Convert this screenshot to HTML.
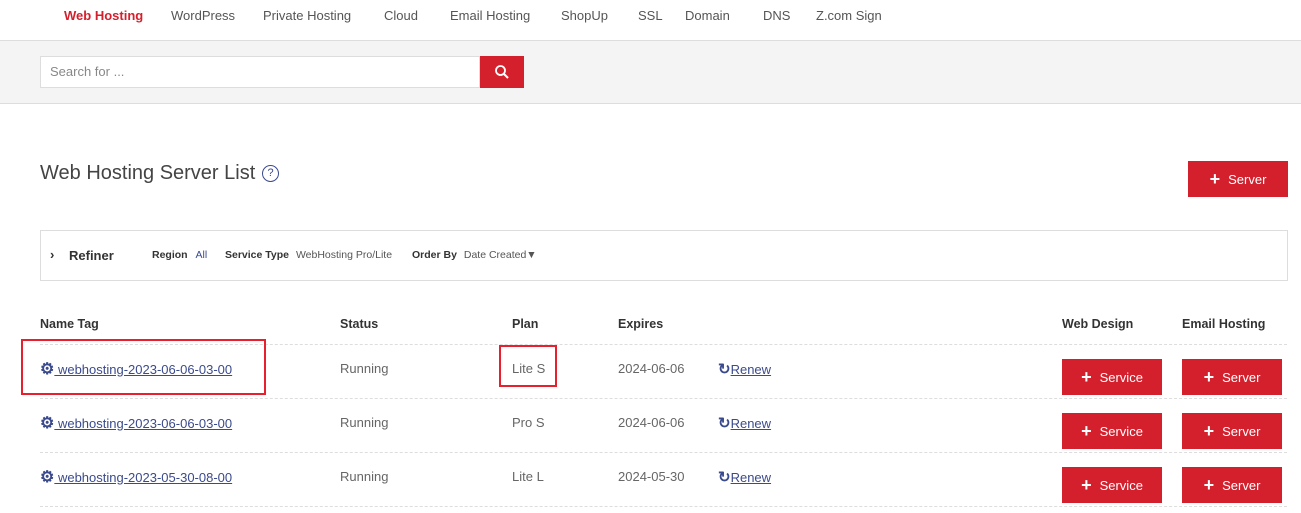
<!DOCTYPE html><html><head><style>
body{margin:0;width:1301px;height:513px;background:#fff;font-family:"Liberation Sans",sans-serif;color:#555;position:relative;overflow:hidden}
.a{position:absolute;white-space:nowrap}
.nav{top:8px;font-size:13px;color:#555}
.btn{position:absolute;background:#d4202d;color:#fff;font-size:13px;display:flex;align-items:center;justify-content:center}
.btn b{font-size:18px;margin-right:8px;font-weight:bold}
.h{font-size:12.5px;font-weight:bold;color:#333;top:317px}
.line{position:absolute;left:40px;width:1247px;border-top:1px dashed #ddd}
.c{font-size:13px;color:#666}
.lnk{color:#3b4a8c;text-decoration:underline;font-size:13px}
.g{color:#3b4a8c;font-size:16px;font-weight:bold}
</style></head><body>
<div class="a nav" style="left:64px;color:#d4202d;font-weight:bold">Web Hosting</div>
<div class="a nav" style="left:171px">WordPress</div>
<div class="a nav" style="left:263px">Private Hosting</div>
<div class="a nav" style="left:384px">Cloud</div>
<div class="a nav" style="left:450px">Email Hosting</div>
<div class="a nav" style="left:561px">ShopUp</div>
<div class="a nav" style="left:638px">SSL</div>
<div class="a nav" style="left:685px">Domain</div>
<div class="a nav" style="left:763px">DNS</div>
<div class="a nav" style="left:816px">Z.com Sign</div>
<div class="a" style="left:0;top:40px;width:1301px;height:62px;background:#f4f4f4;border-top:1px solid #ddd;border-bottom:1px solid #ddd"></div>
<div class="a" style="left:40px;top:56px;width:438px;height:30px;background:#fff;border:1px solid #ddd"></div>
<div class="a" style="left:50px;top:64px;font-size:13px;color:#888">Search for ...</div>
<div class="btn" style="left:480px;top:56px;width:44px;height:32px"><svg width="16" height="16" viewBox="0 0 16 16"><circle cx="6.5" cy="6.5" r="4.5" fill="none" stroke="#fff" stroke-width="1.8"/><path d="M10 10l4 4" stroke="#fff" stroke-width="2"/></svg></div>
<div class="a" style="left:40px;top:162px;font-size:20px;color:#444">Web Hosting Server List</div>
<div class="a" style="left:262px;top:165px;width:15px;height:15px;border:1.5px solid #3b4a8c;border-radius:50%;font-size:11px;color:#3b4a8c;text-align:center;line-height:15px">?</div>
<div class="btn" style="left:1188px;top:161px;width:100px;height:36px"><b>+</b>Server</div>
<div class="a" style="left:40px;top:230px;width:1246px;height:49px;border:1px solid #ddd"></div>
<div class="a" style="left:50px;top:247px;font-size:13px;color:#333;font-weight:bold">›</div>
<div class="a" style="left:69px;top:248px;font-size:13px;color:#333;font-weight:bold">Refiner</div>
<div class="a" style="left:152px;top:249px;font-size:10.5px;color:#333;font-weight:bold">Region <span style="font-weight:normal;color:#3b4a8c;margin-left:5px">All</span></div>
<div class="a" style="left:225px;top:249px;font-size:10.5px;color:#333;font-weight:bold">Service Type <span style="font-weight:normal;color:#555;margin-left:4px">WebHosting Pro/Lite</span></div>
<div class="a" style="left:412px;top:249px;font-size:10.5px;color:#333;font-weight:bold">Order By <span style="font-weight:normal;color:#555;margin-left:4px">Date Created▼</span></div>
<div class="a h" style="left:40px">Name Tag</div>
<div class="a h" style="left:340px">Status</div>
<div class="a h" style="left:512px">Plan</div>
<div class="a h" style="left:618px">Expires</div>
<div class="a h" style="left:1062px">Web Design</div>
<div class="a h" style="left:1182px">Email Hosting</div>
<div class="line" style="top:344px"></div>
<div class="line" style="top:398px"></div>
<div class="line" style="top:452px"></div>
<div class="line" style="top:506px"></div>

<div class="a" style="left:40px;top:359px"><span class="g">⚙</span><span class="lnk"> webhosting-2023-06-06-03-00</span></div>
<div class="a c" style="left:340px;top:361px">Running</div><div class="a c" style="left:512px;top:361px">Lite S</div><div class="a c" style="left:618px;top:361px">2024-06-06</div>
<div class="a" style="left:718px;top:360px"><span style="color:#3b4a8c;font-size:15px;font-weight:bold">↻</span><span class="lnk">Renew</span></div>
<div class="btn" style="left:1062px;top:359px;width:100px;height:36px"><b>+</b>Service</div><div class="btn" style="left:1182px;top:359px;width:100px;height:36px"><b>+</b>Server</div>

<div class="a" style="left:40px;top:413px"><span class="g">⚙</span><span class="lnk"> webhosting-2023-06-06-03-00</span></div>
<div class="a c" style="left:340px;top:415px">Running</div><div class="a c" style="left:512px;top:415px">Pro S</div><div class="a c" style="left:618px;top:415px">2024-06-06</div>
<div class="a" style="left:718px;top:414px"><span style="color:#3b4a8c;font-size:15px;font-weight:bold">↻</span><span class="lnk">Renew</span></div>
<div class="btn" style="left:1062px;top:413px;width:100px;height:36px"><b>+</b>Service</div><div class="btn" style="left:1182px;top:413px;width:100px;height:36px"><b>+</b>Server</div>

<div class="a" style="left:40px;top:467px"><span class="g">⚙</span><span class="lnk"> webhosting-2023-05-30-08-00</span></div>
<div class="a c" style="left:340px;top:469px">Running</div><div class="a c" style="left:512px;top:469px">Lite L</div><div class="a c" style="left:618px;top:469px">2024-05-30</div>
<div class="a" style="left:718px;top:468px"><span style="color:#3b4a8c;font-size:15px;font-weight:bold">↻</span><span class="lnk">Renew</span></div>
<div class="btn" style="left:1062px;top:467px;width:100px;height:36px"><b>+</b>Service</div><div class="btn" style="left:1182px;top:467px;width:100px;height:36px"><b>+</b>Server</div>

<div class="a" style="left:21px;top:339px;width:241px;height:52px;border:2px solid #e8202d"></div>
<div class="a" style="left:499px;top:345px;width:54px;height:38px;border:2px solid #e8202d"></div>
</body></html>
